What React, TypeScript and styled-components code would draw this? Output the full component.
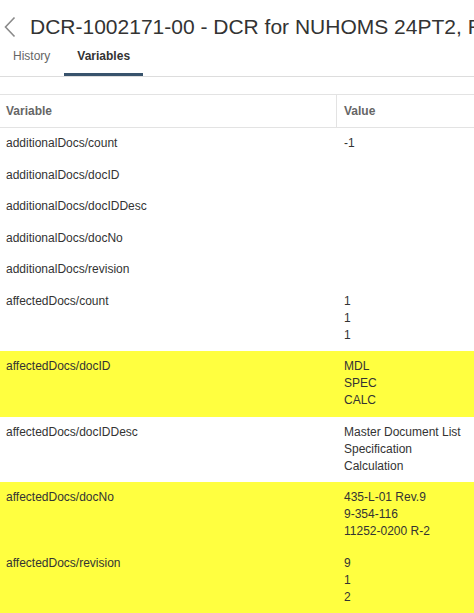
import React from "react";
import styled, { createGlobalStyle } from "styled-components";

const GlobalStyle = createGlobalStyle`
  html, body {
    margin: 0;
    padding: 0;
    background: #ffffff;
  }
  body {
    font-family: "Liberation Sans", Arial, sans-serif;
    color: #333333;
  }
`;

const Page = styled.div`
  width: 474px;
  height: 613px;
  overflow: hidden;
  background: #ffffff;
`;

const TitleRow = styled.div`
  display: flex;
  align-items: center;
  gap: 14px;
  padding: 13px 0 0 4px;
  height: 27px;
  white-space: nowrap;
  overflow: hidden;
`;

const BackButton = styled.button`
  display: flex;
  align-items: center;
  border: 0;
  background: none;
  padding: 0;
  cursor: pointer;
  color: #8a8a8a;
`;

const Title = styled.h1`
  margin: 0;
  font-size: 21px;
  font-weight: normal;
  line-height: 27px;
  color: #333333;
`;

const TabBar = styled.div`
  display: flex;
  gap: 1px;
  border-bottom: 1px solid #dddddd;
`;

const Tab = styled.div<{ $active?: boolean }>`
  height: 25px;
  padding: 8px 13px 0;
  font-size: 12px;
  line-height: 17px;
  font-weight: ${(p) => (p.$active ? "bold" : "normal")};
  color: ${(p) => (p.$active ? "#333333" : "#666666")};
  border-bottom: 3px solid ${(p) => (p.$active ? "#38536c" : "transparent")};
  cursor: pointer;
`;

const Table = styled.div`
  margin-top: 17px;
  display: grid;
  grid-template-columns: 336px 1fr;
  font-size: 12px;
`;

const HeadCell = styled.div<{ $divider?: boolean }>`
  height: 32px;
  display: flex;
  align-items: center;
  padding-left: ${(p) => (p.$divider ? "7px" : "6px")};
  font-weight: bold;
  color: #666666;
  border-top: 1px solid #e3e3e3;
  border-bottom: 1px solid #e3e3e3;
  border-left: ${(p) => (p.$divider ? "1px solid #e3e3e3" : "0")};
`;

const Cell = styled.div<{ $highlight?: boolean; $value?: boolean }>`
  padding: 7.25px 0 7.25px ${(p) => (p.$value ? "8px" : "6px")};
  line-height: 17px;
  color: #333333;
  background: ${(p) => (p.$highlight ? "#ffff40" : "#ffffff")};
  white-space: nowrap;
`;

const Line = styled.div``;

type Variable = { name: string; values: string[]; highlight?: boolean };

const rows: Variable[] = [
  { name: "additionalDocs/count", values: ["-1"] },
  { name: "additionalDocs/docID", values: [""] },
  { name: "additionalDocs/docIDDesc", values: [""] },
  { name: "additionalDocs/docNo", values: [""] },
  { name: "additionalDocs/revision", values: [""] },
  { name: "affectedDocs/count", values: ["1", "1", "1"] },
  { name: "affectedDocs/docID", values: ["MDL", "SPEC", "CALC"], highlight: true },
  {
    name: "affectedDocs/docIDDesc",
    values: ["Master Document List", "Specification", "Calculation"],
  },
  {
    name: "affectedDocs/docNo",
    values: ["435-L-01 Rev.9", "9-354-116", "11252-0200 R-2"],
    highlight: true,
  },
  { name: "affectedDocs/revision", values: ["9", "1", "2"], highlight: true },
];

const ChevronLeft = () => (
  <svg width="12" height="22" viewBox="0 0 12 22" fill="none">
    <polyline points="10.5,1.5 1.5,11 10.5,20.5" stroke="currentColor" strokeWidth="1.6" />
  </svg>
);

export default function App() {
  return (
    <Page>
      <GlobalStyle />
      <TitleRow>
        <BackButton aria-label="Back">
          <ChevronLeft />
        </BackButton>
        <Title>DCR-1002171-00 - DCR for NUHOMS 24PT2, Revision of</Title>
      </TitleRow>
      <TabBar>
        <Tab>History</Tab>
        <Tab $active>Variables</Tab>
      </TabBar>
      <Table>
        <HeadCell>Variable</HeadCell>
        <HeadCell $divider>Value</HeadCell>
        {rows.map((r) => (
          <React.Fragment key={r.name}>
            <Cell $highlight={r.highlight}>{r.name}</Cell>
            <Cell $highlight={r.highlight} $value>
              {r.values.map((v, i) => (
                <Line key={i}>{v || "\u00a0"}</Line>
              ))}
            </Cell>
          </React.Fragment>
        ))}
      </Table>
    </Page>
  );
}
